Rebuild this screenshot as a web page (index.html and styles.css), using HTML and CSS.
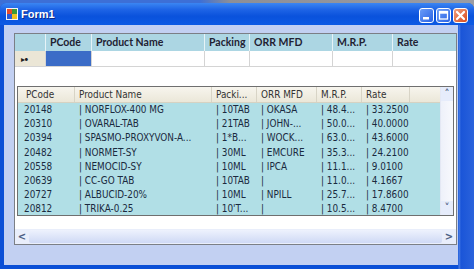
FILE: index.html
```html
<!DOCTYPE html>
<html>
<head>
<meta charset="utf-8">
<link rel="stylesheet" href="styles.css">
</head>
<body>
<div class="desk">
  <div class="window">
    <div class="titlebar">
      <svg class="appicon" width="12" height="12" viewBox="0 0 12 12">
        <rect x="0" y="0" width="12" height="12" fill="#f4f4f4"/>
        <rect x="1" y="1" width="5" height="5" fill="#e84a2a"/>
        <rect x="6" y="1" width="5" height="5" fill="#3a9a3a"/>
        <rect x="1" y="6" width="5" height="5" fill="#2a5ad8"/>
        <rect x="6" y="6" width="5" height="5" fill="#f0c020"/>
      </svg>
      <span class="title">Form1</span>
      <div class="tbtns">
        <div class="tbtn"><svg width="15" height="15" viewBox="0 0 15 15"><rect x="4" y="9" width="6" height="2.5" fill="#fff"/></svg></div>
        <div class="tbtn"><svg width="15" height="15" viewBox="0 0 15 15"><rect x="3.5" y="3.5" width="8" height="7.5" fill="none" stroke="#fff" stroke-width="1.3"/><rect x="3.5" y="3.5" width="8" height="2.2" fill="#fff"/></svg></div>
        <div class="tbtn close"><svg width="15" height="15" viewBox="0 0 15 15"><path d="M4 4 L11 11 M11 4 L4 11" stroke="#fff" stroke-width="2.2" stroke-linecap="round"/></svg></div>
      </div>
    </div>
    <div class="client">
      <div class="grid1">
        <div class="g1row g1head">
          <div class="c c0"></div>
          <div class="c c1">PCode</div>
          <div class="c c2">Product Name</div>
          <div class="c c3">Packing</div>
          <div class="c c4">ORR MFD</div>
          <div class="c c5">M.R.P.</div>
          <div class="c c6">Rate</div>
        </div>
        <div class="g1row g1data">
          <div class="c c0 rh">▸•</div>
          <div class="c c1 sel"></div>
          <div class="c c2"></div>
          <div class="c c3"></div>
          <div class="c c4"></div>
          <div class="c c5"></div>
          <div class="c c6"></div>
        </div>
        <div class="g1body">
          <div class="list">
            <div class="lmain">
              <div class="lhead">
                <div class="h k1">PCode</div>
                <div class="h k2">Product Name</div>
                <div class="h k3">Packi...</div>
                <div class="h k4">ORR MFD</div>
                <div class="h k5">M.R.P.</div>
                <div class="h k6">Rate</div>
                <div class="h k7"></div>
              </div>
              <div class="lrows">
                <div class="lr"><span class="k1">20148</span><span class="k2">| NORFLOX-400 MG</span><span class="k3">| 10TAB</span><span class="k4">| OKASA</span><span class="k5">| 48.4...</span><span class="k6">| 33.2500</span></div>
                <div class="lr"><span class="k1">20310</span><span class="k2">| OVARAL-TAB</span><span class="k3">| 21TAB</span><span class="k4">| JOHN-...</span><span class="k5">| 50.0...</span><span class="k6">| 40.0000</span></div>
                <div class="lr"><span class="k1">20394</span><span class="k2">| SPASMO-PROXYVON-A...</span><span class="k3">| 1*B...</span><span class="k4">| WOCK...</span><span class="k5">| 63.0...</span><span class="k6">| 43.6000</span></div>
                <div class="lr"><span class="k1">20482</span><span class="k2">| NORMET-SY</span><span class="k3">| 30ML</span><span class="k4">| EMCURE</span><span class="k5">| 35.3...</span><span class="k6">| 24.2100</span></div>
                <div class="lr"><span class="k1">20558</span><span class="k2">| NEMOCID-SY</span><span class="k3">| 10ML</span><span class="k4">| IPCA</span><span class="k5">| 11.1...</span><span class="k6">| 9.0100</span></div>
                <div class="lr"><span class="k1">20639</span><span class="k2">| CC-GO TAB</span><span class="k3">| 10TAB</span><span class="k4">|</span><span class="k5">| 11.0...</span><span class="k6">| 4.1667</span></div>
                <div class="lr"><span class="k1">20727</span><span class="k2">| ALBUCID-20%</span><span class="k3">| 10ML</span><span class="k4">| NPILL</span><span class="k5">| 25.7...</span><span class="k6">| 17.8600</span></div>
                <div class="lr"><span class="k1">20812</span><span class="k2">| TRIKA-0.25</span><span class="k3">| 10'T...</span><span class="k4">|</span><span class="k5">| 10.5...</span><span class="k6">| 8.4700</span></div>
              </div>
            </div>
            <div class="vscroll">
              <div class="sbtn">˄</div>
              <div class="vtrack"></div>
              <div class="sbtn">˅</div>
            </div>
          </div>
        </div>
        <div class="hscroll">
          <div class="hbtn">&lt;</div>
          <div class="htrack"><div class="hthumb"></div></div>
          <div class="hbtn">&gt;</div>
        </div>
      </div>
    </div>
  </div>
</div>
</body>
</html>
```
FILE: styles.css
```css
* { box-sizing: border-box; }
html, body { margin: 0; padding: 0; }
body {
  width: 474px; height: 269px; overflow: hidden;
  background: #3d6fd6;
  font-family: "Liberation Sans", sans-serif;
}
.desk {
  height: 269px;
  background: linear-gradient(90deg, #3d6fd6 0, #3d6fd6 200px, #8d8f96 230px, #9a9ca4 474px);
  padding-top: 3px;
}
.window {
  width: 474px;
  height: 266px;
  display: flex;
  flex-direction: column;
  background: linear-gradient(90deg, #0b4fd6 0, #0b4fd6 458px, #4d7fe6 459px, #1a55d8 461px, #2a62dc 474px);
  border-radius: 6px 6px 0 0;
}
.titlebar {
  height: 22px;
  display: flex;
  align-items: center;
  padding: 0 6px 0 6px;
  background: linear-gradient(#3b86f2 0, #1e64e6 30%, #0a52dc 60%, #0c5ae4 100%);
  border-radius: 6px 6px 0 0;
}
.appicon { margin-right: 3px; }
.title {
  color: #fff;
  font-family: "Liberation Sans", Arial, sans-serif;
  font-weight: bold;
  font-size: 11px;
  text-shadow: 1px 1px 0 #0a2a8a;
}
.tbtns { margin-left: auto; display: flex; gap: 2px; margin-top: 2px; }
.tbtn {
  width: 15px; height: 15px;
  border: 1px solid #fff;
  border-radius: 3px;
  background: linear-gradient(135deg, #6a9cf8, #2a62e4);
  display: flex;
}
.tbtn svg { margin: -1px; }
.tbtn.close { background: linear-gradient(135deg, #f0a080, #d84a1c); }
.client {
  flex: 1;
  margin: 0 16px 4px 4px;
  background: #c2d0f2;
  padding: 8px 0 17px 10px;
  display: flex;
}
.grid1 {
  width: 443px;
  height: 212px;
  border: 1px solid #7b7f86;
  background: #fff;
  display: flex;
  flex-direction: column;
  font-family: "Lato", sans-serif;
  font-size: 10.5px;
  color: #223;
}
.g1row { display: flex; }
.g1head { height: 17px; background: #acd6e3; font-weight: bold; }
.g1head .c { border-right: 1px solid #e6f3f7; }
.g1data { height: 16px; border-bottom: 1px solid #d4d4d4; }
.g1data .c { border-right: 1px solid #d4d4d4; }
.c { padding-left: 4px; line-height: 16px; white-space: nowrap; overflow: hidden; }
.c0 { width: 31px; }
.c1 { width: 46px; }
.c2 { width: 113px; }
.c3 { width: 45px; }
.c4 { width: 83px; }
.c5 { width: 60px; }
.c6 { flex: 1; border-right: none !important; }
.rh { background: #ebe6d6; font-size: 8px; letter-spacing: -1px; color: #222; padding-left: 6px; }
.sel { background: #3b6cc7; }
.g1body { flex: 1; padding: 19px 2px 0 2px; }
.list {
  height: 130px;
  border: 1px solid #6f6f6f;
  display: flex;
  background: #fff;
  font-family: "DejaVu Sans Condensed", "DejaVu Sans", sans-serif;
  font-size: 9.9px;
  color: #1a2a3e;
  overflow: hidden;
}
.lmain { flex: 1; display: flex; flex-direction: column; overflow: hidden; }
.lhead {
  height: 16px;
  flex: none;
  display: flex;
  background: linear-gradient(#f7f5ee, #ebe7d8);
  border-bottom: 1px solid #d6d2c2;
  color: #333;
}
.h { line-height: 15px; padding-left: 4px; border-right: 1px solid #d8d4c6; white-space: nowrap; }
.h.k1 { padding-left: 8px; }
.k1 { width: 57px; }
.k2 { width: 137px; }
.k3 { width: 45px; }
.k4 { width: 60px; }
.k5 { width: 45px; }
.k6 { width: 48px; }
.k7 { flex: 1; border-right: none; }
.lrows { flex: 1; background: #b1dfe6; }
.lr { display: flex; height: 14.2px; line-height: 14.2px; white-space: nowrap; }
.lr span { display: block; overflow: hidden; padding-left: 4px; }
.lr span.k1 { padding-left: 6px; }
.lr span.k6 { overflow: visible; }
.vscroll {
  width: 13px;
  flex: none;
  display: flex;
  flex-direction: column;
  background: #f2f4fb;
  border-left: 1px solid #e4e8f4;
}
.sbtn {
  height: 14px;
  font-family: "DejaVu Sans", sans-serif;
  font-size: 10px;
  line-height: 14px;
  text-align: center;
  color: #4d6185;
  font-weight: bold;
  background: #e6ecfb;
}
.vtrack { flex: 1; background: linear-gradient(90deg, #eef1fa, #f8f9fd); }
.hscroll {
  height: 15px;
  display: flex;
  background: #e9eefb;
  font-family: "DejaVu Sans", sans-serif;
  font-size: 10px;
  color: #4d6185;
  font-weight: bold;
}
.hbtn { width: 14px; line-height: 15px; text-align: center; }
.htrack { flex: 1; padding: 1px 0; }
.hthumb {
  height: 100%;
  border-radius: 2px;
  background: linear-gradient(#eef2fd, #dbe3f8 60%, #cfd9f5);
}
```
